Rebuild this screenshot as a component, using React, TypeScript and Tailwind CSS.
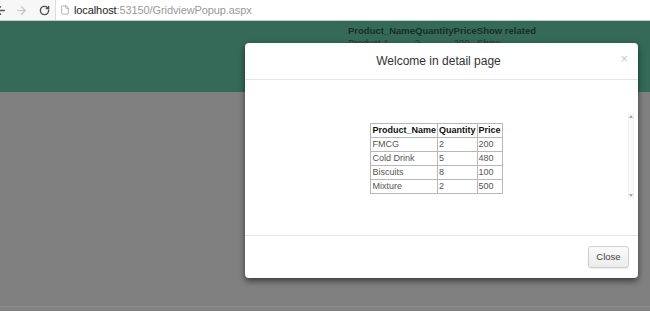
import { ArrowLeft, ArrowRight, RotateCw, File } from "lucide-react";

const items = [
  { name: "FMCG", qty: "2", price: "200" },
  { name: "Cold Drink", qty: "5", price: "480" },
  { name: "Biscuits", qty: "8", price: "100" },
  { name: "Mixture", qty: "2", price: "500" },
];

function BrowserBar() {
  return (
    <div className="flex h-[21px] items-center border-b border-[#c9c9c9] bg-[#f7f7f7]">
      <div className="flex w-[55px] items-center">
        <ArrowLeft size={13} strokeWidth={2.6} className="-ml-[6px] text-[#555]" />
        <ArrowRight size={13} strokeWidth={2.2} className="ml-[8px] text-[#c4c4c4]" />
        <RotateCw size={11} strokeWidth={3} className="ml-[11px] text-[#505050]" />
      </div>
      <div className="flex h-full flex-1 items-center border-l border-[#dcdcdc] bg-white pl-[4px]">
        <File size={10} strokeWidth={1.5} className="text-[#888]" />
        <span className="ml-[4px] text-[11px] tracking-[-0.1px] text-[#222]">localhost</span>
        <span className="text-[11px] tracking-[-0.1px] text-[#999]">:53150/GridviewPopup.aspx</span>
      </div>
    </div>
  );
}

function ProductTable() {
  return (
    <table className="border-collapse border border-[#a0a0a0] text-[9px] leading-none text-[#333]">
      <thead>
        <tr className="h-[14px]">
          <th className="border border-[#b8b8b8] px-[1px] text-left font-bold text-[#111]">Product_Name</th>
          <th className="border border-[#b8b8b8] px-[1px] text-left font-bold text-[#111]">Quantity</th>
          <th className="border border-[#b8b8b8] px-[1px] text-left font-bold text-[#111]">Price</th>
        </tr>
      </thead>
      <tbody>
        {items.map((r) => (
          <tr key={r.name} className="h-[14px]">
            <td className="border border-[#b8b8b8] px-[1px] text-[#555]">{r.name}</td>
            <td className="border border-[#b8b8b8] px-[1px] text-[#555]">{r.qty}</td>
            <td className="border border-[#b8b8b8] px-[1px] text-[#555]">{r.price}</td>
          </tr>
        ))}
      </tbody>
    </table>
  );
}

export default function App() {
  return (
    <div className="relative flex h-[311px] w-[650px] flex-col overflow-hidden bg-[#808080] font-['Liberation_Sans',Arial,sans-serif]">
      <BrowserBar />

      {/* page behind the overlay */}
      <div className="h-[71px] bg-[#346a57] pl-[348px] pt-[4px]">
        <table className="text-[9.5px] leading-[12px] text-[#1a2e26]">
          <tbody>
            <tr>
              <td className="font-bold">Product_Name</td>
              <td className="font-bold">Quantity</td>
              <td className="font-bold">Price</td>
              <td className="font-bold">Show related</td>
            </tr>
            <tr className="text-[#1f3a30]">
              <td>Product 1</td>
              <td>2</td>
              <td>200</td>
              <td>Show</td>
            </tr>
          </tbody>
        </table>
      </div>
      <div className="flex-1" />
      <div className="h-[1px] bg-[#8b8b8b]" />
      <div className="h-[4px] bg-[#828282]" />

      {/* modal */}
      <div className="absolute left-[245px] top-[43px] flex h-[235px] w-[393px] flex-col rounded-[4px] bg-white shadow-[0_3px_6px_rgba(0,0,0,0.55)]">
        <div className="relative flex h-[37px] items-center justify-center border-b border-[#e5e5e5] pr-[6px]">
          <span className="text-[12px] text-[#333]">Welcome in detail page</span>
          <span className="absolute right-[10px] top-[9px] text-[13px] leading-none text-[#c8c8c8]">×</span>
        </div>
        <div className="relative flex-1 border-b border-[#e5e5e5]">
          <div className="flex justify-center pt-[43px]">
            <div className="mr-[10px]">
              <ProductTable />
            </div>
          </div>
          {/* scrollbar */}
          <div className="absolute right-[4px] top-[33px] flex h-[86px] w-[6px] flex-col items-center justify-between border-l border-r border-[#f0f0f0] bg-[#fafafa] py-[2px]">
            <span className="h-0 w-0 border-x-[2px] border-b-[3px] border-x-transparent border-b-[#a8a8a8]" />
            <span className="h-0 w-0 border-x-[2px] border-t-[3px] border-x-transparent border-t-[#a8a8a8]" />
          </div>
        </div>
        <div className="flex h-[42px] items-center justify-end pr-[9px]">
          <button className="h-[22px] w-[41px] rounded-[3px] border border-[#cfcfcf] bg-gradient-to-b from-[#fbfbfb] to-[#ececec] text-[9.5px] text-[#444] shadow-[0_1px_1px_rgba(0,0,0,0.08)]">
            Close
          </button>
        </div>
      </div>
    </div>
  );
}
